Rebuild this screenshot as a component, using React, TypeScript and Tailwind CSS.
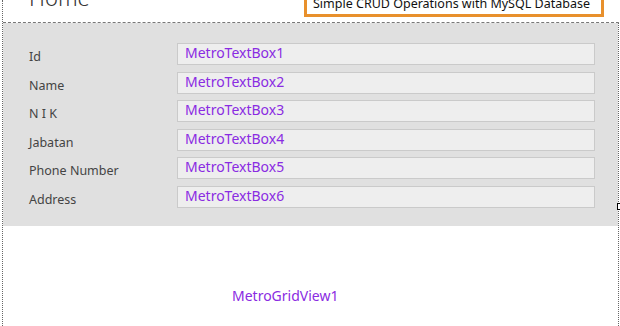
const fields = ['Id', 'Name', 'N I K', 'Jabatan', 'Phone Number', 'Address'];

export default function App() {
  return (
    <div className="relative h-[326px] w-[620px] overflow-hidden bg-white pl-[2px] font-['Noto_Sans',sans-serif] text-[#444]">
      <div className="flex h-full flex-col border-l border-dotted border-[#666]">
        {/* form title bar, scrolled up so only the bottom shows */}
        <div className="flex h-[22px] shrink-0 items-start">
          <span className="ml-[26px] -mt-[18px] text-[22px] font-light leading-[30px] text-[#333]">
            Home
          </span>
          <div className="-mt-[10px] ml-auto mr-[16px] flex h-[27px] w-[300px] items-center border-[3px] border-[#e8902c] bg-white pl-[6px] pt-[1px] text-[12.5px] text-[#111]">
            Simple CRUD Operations with MySQL Database
          </div>
        </div>

        <div className="relative flex w-[616px] flex-1 flex-col border-t border-r border-dashed border-t-[#777] border-r-[#666] [border-right-style:dotted]">
          <div className="flex h-[203px] shrink-0 flex-col gap-[6.6px] bg-[#e0e0e0] pt-[20px]">
            {fields.map((f, i) => (
              <div key={f} className="flex">
                <span className="w-[174px] shrink-0 pl-[26px] pt-[6px] text-[12.5px] leading-[16px]">{f}</span>
                <div className="flex h-[22px] w-[418px] shrink-0 items-center border border-[#cacaca] bg-[#eeeeee] pb-[3px] pl-[7px] text-[14px] text-[#8a2be2]">
                  MetroTextBox{i + 1}
                </div>
              </div>
            ))}
          </div>
          <div className="flex-1 pl-[229px] pt-[59px] text-[14px] text-[#8a2be2]">MetroGridView1</div>

          {/* resize grip */}
          <div className="absolute right-[-5px] top-[180px] h-[7px] w-[6px] border border-black bg-white" />
        </div>
      </div>
    </div>
  );
}
